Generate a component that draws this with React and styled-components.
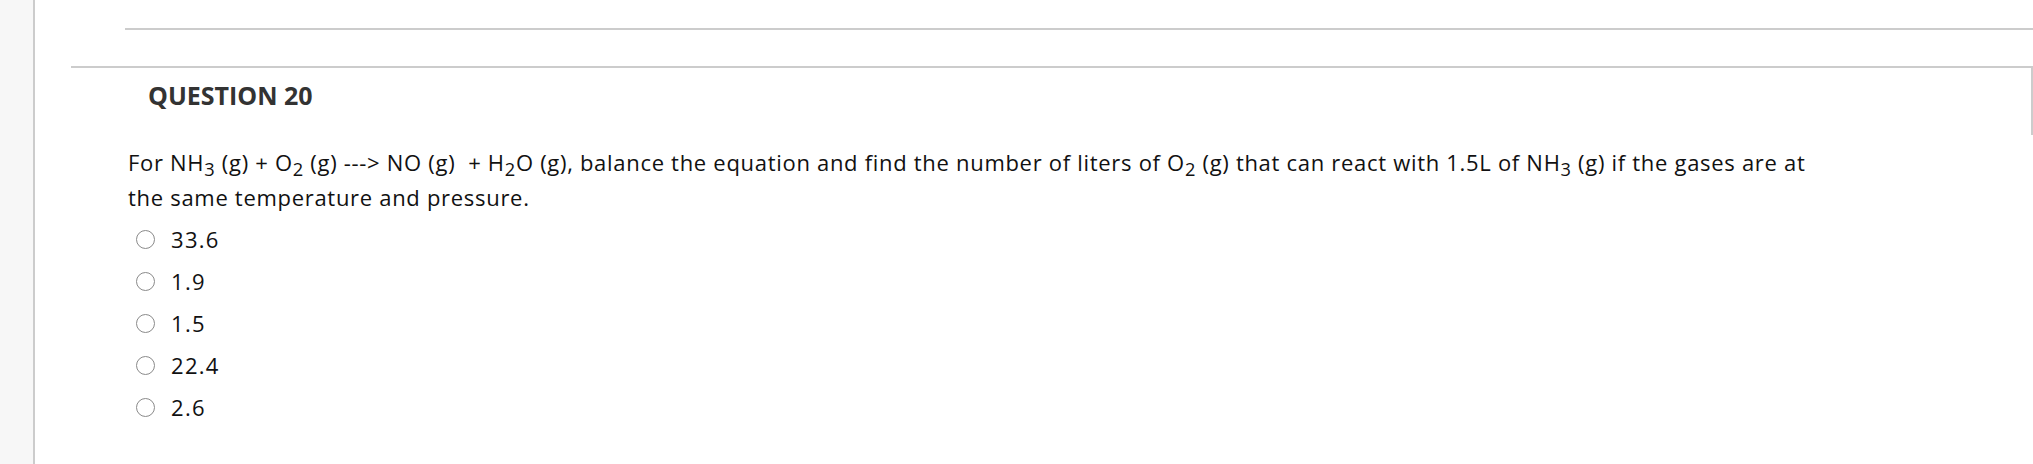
import React from "react";
import styled, { createGlobalStyle } from "styled-components";

const Global = createGlobalStyle`
  html, body { margin: 0; padding: 0; background: #ffffff; }
  body { font-family: "Open Sans", "Noto Sans", sans-serif; overflow: hidden; }
`;

const Page = styled.div`
  display: flex;
  width: 2033px;
  height: 464px;
`;

const Rail = styled.div`
  width: 33px;
  flex: 0 0 33px;
  background: #f7f7f7;
  border-right: 2px solid #cccccc;
`;

const Main = styled.div`
  flex: 1;
  display: flex;
  flex-direction: column;
  min-width: 0;
`;

const Rule = styled.div`
  margin-top: 28px;
  margin-left: 90px;
  height: 2px;
  background: #cccccc;
`;

const Question = styled.section`
  margin-top: 36px;
  margin-left: 36px;
  display: flex;
  flex-direction: column;
`;

const Header = styled.div`
  height: 69px;
  border-top: 2px solid #cccccc;
  border-right: 2px solid #cccccc;
  padding-left: 77px;
  box-sizing: border-box;
  padding-top: 10px;
`;

const Title = styled.h2`
  margin: 0;
  font-size: 25px;
  font-weight: 700;
  color: #333333;
  line-height: normal;
`;

const Body = styled.div`
  padding-left: 57px;
  margin-top: 10px;
`;

const Prompt = styled.p`
  margin: 0;
  max-width: 1700px;
  font-size: 22px;
  line-height: 35px;
  letter-spacing: 0.7px;
  color: #111111;
`;

const Sub = styled.span`
  display: inline-block;
  font-size: 0.83em;
  line-height: 1;
  transform: translateY(0.28em);
`;

const Options = styled.ul`
  list-style: none;
  margin: 3px 0 0;
  padding: 0 0 0 8px;
`;

const Option = styled.li`
  display: flex;
  align-items: center;
  height: 42px;
  gap: 16px;
`;

const Radio = styled.input.attrs({ type: "radio" })`
  appearance: none;
  -webkit-appearance: none;
  margin: 0;
  width: 19px;
  height: 19px;
  border: 1.5px solid #8a8a8a;
  border-radius: 50%;
  background: #ffffff;
  box-sizing: border-box;
`;

const Label = styled.label`
  font-size: 22px;
  letter-spacing: 1.3px;
  color: #111111;
  line-height: 1;
`;

const answers = ["33.6", "1.9", "1.5", "22.4", "2.6"];

export default function App() {
  return (
    <>
      <Global />
      <Page>
        <Rail />
        <Main>
          <Rule />
          <Question>
            <Header>
              <Title>QUESTION 20</Title>
            </Header>
            <Body>
              <Prompt>
                For NH<Sub>3</Sub> (g) + O<Sub>2</Sub> (g) ---&gt; NO (g)&nbsp; + H<Sub>2</Sub>O (g), balance the equation and find the number of liters of O<Sub>2</Sub> (g) that can react with 1.5L of NH<Sub>3</Sub> (g) if the gases are at the same temperature and pressure.
              </Prompt>
              <Options>
                {answers.map((a, i) => (
                  <Option key={a}>
                    <Radio name="q20" id={`q20-${i}`} />
                    <Label htmlFor={`q20-${i}`}>{a}</Label>
                  </Option>
                ))}
              </Options>
            </Body>
          </Question>
        </Main>
      </Page>
    </>
  );
}
